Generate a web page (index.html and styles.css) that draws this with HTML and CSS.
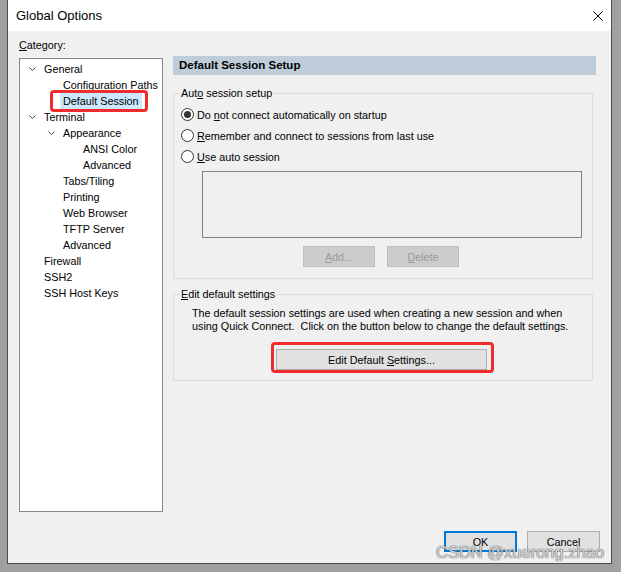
FILE: index.html
```html
<!DOCTYPE html>
<html lang="en">
<head>
    <meta charset="UTF-8">
    <title>Global Options</title>
    <link rel="stylesheet" href="styles.css">
</head>
<body>
    <div class="window">
        <div class="titlebar">
            <span>Global Options</span>
            <svg class="close" width="10" height="10" viewBox="0 0 10 10">
                <path d="M0.5 0.5 L9.5 9.5 M9.5 0.5 L0.5 9.5" stroke="#000" stroke-width="1" fill="none"/>
            </svg>
        </div>

        <div class="main">
            <div class="left">
                <div class="category"><u>C</u>ategory:</div>
                <ul class="tree">
                    <li class="lvl1"><span class="toggle"><svg width="7" height="4" viewBox="0 0 7 4"><polyline points="0.5,0.5 3.5,3.5 6.5,0.5" fill="none" stroke="#404040"/></svg></span><span class="label">General</span></li>
                    <li class="lvl2"><span class="toggle"></span><span class="label">Configuration Paths</span></li>
                    <li class="lvl2"><span class="toggle"></span><span class="label selected">Default Session<span class="mark"></span></span></li>
                    <li class="lvl1"><span class="toggle"><svg width="7" height="4" viewBox="0 0 7 4"><polyline points="0.5,0.5 3.5,3.5 6.5,0.5" fill="none" stroke="#404040"/></svg></span><span class="label">Terminal</span></li>
                    <li class="lvl2"><span class="toggle"><svg width="7" height="4" viewBox="0 0 7 4"><polyline points="0.5,0.5 3.5,3.5 6.5,0.5" fill="none" stroke="#404040"/></svg></span><span class="label">Appearance</span></li>
                    <li class="lvl3"><span class="toggle"></span><span class="label">ANSI Color</span></li>
                    <li class="lvl3"><span class="toggle"></span><span class="label">Advanced</span></li>
                    <li class="lvl2"><span class="toggle"></span><span class="label">Tabs/Tiling</span></li>
                    <li class="lvl2"><span class="toggle"></span><span class="label">Printing</span></li>
                    <li class="lvl2"><span class="toggle"></span><span class="label">Web Browser</span></li>
                    <li class="lvl2"><span class="toggle"></span><span class="label">TFTP Server</span></li>
                    <li class="lvl2"><span class="toggle"></span><span class="label">Advanced</span></li>
                    <li class="lvl1"><span class="toggle"></span><span class="label">Firewall</span></li>
                    <li class="lvl1"><span class="toggle"></span><span class="label">SSH2</span></li>
                    <li class="lvl1"><span class="toggle"></span><span class="label">SSH Host Keys</span></li>
                </ul>
            </div>

            <div class="right">
                <div class="header">Default Session Setup</div>

                <fieldset class="auto">
                    <legend>Aut<u>o</u> session setup</legend>
                    <div class="group-body">
                        <div class="radio-row"><span class="radio on"></span><span>Do <u>n</u>ot connect automatically on startup</span></div>
                        <div class="radio-row"><span class="radio"></span><span><u>R</u>emember and connect to sessions from last use</span></div>
                        <div class="radio-row"><span class="radio"></span><span><u>U</u>se auto session</span></div>
                        <div class="listbox"></div>
                        <div class="btn-row">
                            <button class="btn" disabled><u>A</u>dd...</button>
                            <button class="btn" disabled><u>D</u>elete</button>
                        </div>
                    </div>
                </fieldset>

                <fieldset class="defaults">
                    <legend><u>E</u>dit default settings</legend>
                    <div class="group-body">
                        <p class="desc">The default session settings are used when creating a new session and when<br>using Quick Connect.&nbsp; Click on the button below to change the default settings.</p>
                        <div class="edit-wrap">
                            <button class="btn edit-btn">Edit Default <u>S</u>ettings...</button>
                            <span class="mark"></span>
                        </div>
                    </div>
                </fieldset>
            </div>
        </div>

        <div class="footer">
            <button class="btn default">OK</button>
            <button class="btn">Cancel</button>
        </div>
    </div>

    <div class="watermark">CSDN @xuerong.zhao</div>
</body>
</html>
```

FILE: styles.css
```css
* {
    margin: 0;
    padding: 0;
    box-sizing: border-box;
}

body {
    position: relative;
    height: 572px;
    overflow: hidden;
    background: #a0a0a0;
    font-family: "Liberation Sans", Arial, sans-serif;
    font-size: 10.8px;
    color: #000;
}

.window {
    margin-left: 7px;
    width: 605px;
    height: 564px;
    background: #f0f0f0;
    border: 1px solid #4d4d4d;
    border-top: none;
    display: flex;
    flex-direction: column;
}

.titlebar {
    height: 31px;
    flex: none;
    background: #fff;
    display: flex;
    align-items: center;
    justify-content: space-between;
    padding: 0 8px;
    font-size: 13px;
    line-height: 31px;
}

.main {
    display: flex;
    padding: 6px 0 0 11px;
}

/* left: category tree */
.left {
    width: 144px;
    flex: none;
}

.category {
    height: 16px;
    line-height: 16px;
}

.tree {
    margin-top: 5px;
    height: 454px;
    background: #fff;
    border: 1px solid #828790;
    list-style: none;
    padding-top: 2px;
}

.tree li {
    height: 16px;
    line-height: 16px;
    display: flex;
    align-items: center;
    white-space: nowrap;
}

.toggle {
    width: 16px;
    height: 16px;
    margin-right: 4px;
    flex: none;
    display: flex;
    align-items: center;
    justify-content: center;
}

.lvl1 { padding-left: 4px; }
.lvl2 { padding-left: 23px; }
.lvl3 { padding-left: 43px; }

.label.selected {
    position: relative;
    background: #cce8ff;
    padding: 0 3px;
    margin-left: -3px;
}

.mark {
    position: absolute;
    border: 3px solid #f02b2b;
    border-radius: 4px;
}

.selected .mark {
    left: -10px;
    top: -3px;
    width: 98px;
    height: 22px;
}

/* right: settings page */
.right {
    width: 423px;
    margin-left: 10px;
    flex: none;
}

.header {
    margin-top: 19px;
    height: 19px;
    line-height: 19px;
    padding-left: 6px;
    background: #bfcddb;
    font-weight: bold;
    font-size: 11.5px;
}

fieldset {
    border: 1px solid #dcdcdc;
    margin-right: 3px;
    padding: 0;
    min-width: 0;
}

legend {
    margin-left: 6px;
    padding: 0 1px;
    line-height: 14px;
}

.auto {
    margin-top: 11px;
}

.auto .group-body {
    padding: 4px 0 11px 7px;
}

.radio-row {
    display: flex;
    align-items: center;
    height: 21px;
    white-space: nowrap;
}

.radio {
    width: 13px;
    height: 13px;
    margin-right: 3px;
    border: 1px solid #333;
    border-radius: 50%;
    background: #fff;
    display: flex;
    align-items: center;
    justify-content: center;
}

.radio.on::after {
    content: "";
    width: 7px;
    height: 7px;
    border-radius: 50%;
    background: #333;
}

.listbox {
    margin: 4px 0 0 21px;
    width: 380px;
    height: 67px;
    border: 1px solid #828282;
}

.btn-row {
    display: flex;
    gap: 12px;
    margin: 8px 0 0 122px;
}

.btn {
    width: 73px;
    height: 21px;
    font: inherit;
    color: #000;
    background: #e1e1e1;
    border: 1px solid #adadad;
}

.btn:disabled {
    width: 72px;
    background: #cccccc;
    border-color: #bfbfbf;
    color: #9a9a9a;
}

.btn.default {
    border: 2px solid #0078d7;
}

.defaults {
    margin-top: 8px;
}

.defaults .group-body {
    padding: 6px 0 10px 18px;
}

.desc {
    line-height: 13px;
    white-space: nowrap;
}

.edit-wrap {
    position: relative;
    width: 211px;
    margin: 16px 0 0 84px;
}

.edit-btn {
    width: 211px;
}

.edit-wrap .mark {
    left: -5px;
    top: -7px;
    width: 223px;
    height: 31px;
}

.footer {
    margin-top: auto;
    display: flex;
    justify-content: flex-end;
    gap: 10px;
    padding: 0 11px 11px 0;
}

.watermark {
    position: absolute;
    left: 436px;
    top: 543px;
    font-size: 16.5px;
    line-height: 19px;
    color: rgba(255, 255, 255, 0.75);
    text-shadow: 0 0 1px #555, 0 0 1px #555;
}
```
